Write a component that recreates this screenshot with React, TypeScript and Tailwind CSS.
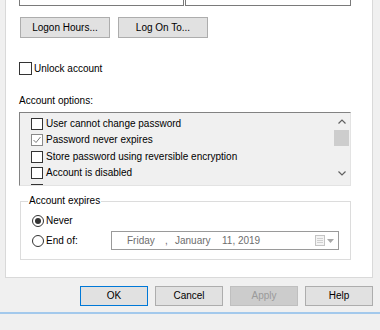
import { useState } from "react";

const options = [
  { label: "User cannot change password", checked: false },
  { label: "Password never expires", checked: true },
  { label: "Store password using reversible encryption", checked: false },
  { label: "Account is disabled", checked: false },
  { label: "Smart card is required for interactive logon", checked: false },
];

const CheckBox = ({ checked = false, muted = false }: { checked?: boolean; muted?: boolean }) => (
  <span
    className={`flex h-[12px] w-[12px] shrink-0 items-center justify-center border bg-white ${
      muted ? "border-[#8a8a8a]" : "border-[#333333]"
    }`}
  >
    {checked && (
      <svg width="10" height="10" viewBox="0 0 10 10">
        <polyline points="1.5,5 4,7.5 8.5,2" fill="none" stroke="#7a7a7a" strokeWidth="1" />
      </svg>
    )}
  </span>
);

const Radio = ({ checked = false }: { checked?: boolean }) => (
  <span className="flex h-[12px] w-[12px] shrink-0 items-center justify-center rounded-full border border-[#333333] bg-white">
    {checked && <span className="h-[6px] w-[6px] rounded-full bg-[#333333]" />}
  </span>
);

const Button = ({ label, className = "" }: { label: string; className?: string }) => (
  <button className={`flex items-center justify-center border text-[10px] leading-none ${className}`}>{label}</button>
);

export default function App() {
  const [neverExpires, setNeverExpires] = useState(true);

  return (
    <div className="relative h-[330px] w-[380px] overflow-hidden bg-[#f0f0f0] font-['Liberation_Sans',Arial,sans-serif] text-[10px] leading-[12px] text-black">
      {/* tab page */}
      <div className="ml-[5px] h-[294px] w-[368px] border-x border-b border-[#d9d9d9] bg-white pl-[13px]">
        {/* name fields, scrolled off the top */}
        <div className="-mt-[16px] flex h-[22px] gap-[1px]">
          <div className="h-full w-[165px] border border-[#7a7a7a] bg-white" />
          <div className="h-full w-[166px] border border-[#7a7a7a] bg-white" />
        </div>

        <div className="ml-[1px] mt-[11px] flex gap-[8px]">
          <Button label="Logon Hours..." className="h-[21px] w-[90px] border-[#adadad] bg-[#e1e1e1]" />
          <Button label="Log On To..." className="h-[21px] w-[90px] border-[#adadad] bg-[#e1e1e1]" />
        </div>

        <label className="mt-[24px] flex h-[13px] items-center gap-[2px]">
          <span className="h-[13px] w-[13px] border border-[#333333] bg-white" />
          <span>Unlock account</span>
        </label>

        <div className="mt-[20px] h-[12px]">Account options:</div>

        {/* account options list */}
        <div className="mt-[5px] flex h-[74px] w-[332px] overflow-hidden border border-b-[#e3e3e3] border-l-[#828282] border-r-[#e3e3e3] border-t-[#828282] bg-[#f0f0f0]">
          <div className="flex-1 overflow-hidden pl-[11px] pt-[2.5px]">
            {options.map((o) => (
              <div key={o.label} className="flex h-[16.5px] items-center gap-[2px] whitespace-nowrap">
                <CheckBox checked={o.checked} muted={o.checked} />
                <span className="pl-[1px]">{o.label}</span>
              </div>
            ))}
          </div>
          <div className="flex w-[17px] flex-col items-center pt-[6px]">
            <svg width="8" height="5" viewBox="0 0 8 5">
              <polyline points="0.5,4.5 4,1 7.5,4.5" fill="none" stroke="#606060" strokeWidth="1.2" />
            </svg>
            <div className="mt-[6px] h-[16px] w-[15px] bg-[#cdcdcd]" />
            <svg className="mt-[25px]" width="8" height="5" viewBox="0 0 8 5">
              <polyline points="0.5,0.5 4,4 7.5,0.5" fill="none" stroke="#606060" strokeWidth="1.2" />
            </svg>
          </div>
        </div>

        {/* account expires */}
        <fieldset className="ml-[1px] mt-[9px] h-[65px] w-[331px] border border-[#dcdcdc] pl-[11px]">
          <legend className="-ml-[4px] px-[1px] leading-[12px]">Account expires</legend>
          <label className="mt-[6px] flex h-[16px] items-center gap-[2px]" onClick={() => setNeverExpires(true)}>
            <Radio checked={neverExpires} />
            <span>Never</span>
          </label>
          <div className="mt-[2px] flex h-[19px] items-center">
            <label className="flex w-[79px] items-center gap-[2px]" onClick={() => setNeverExpires(false)}>
              <Radio checked={!neverExpires} />
              <span>End of:</span>
            </label>
            <div className="flex h-[19px] w-[228px] items-center border border-[#9a9a9a] bg-white pl-[15px] text-[#6d6d6d]">
              <span className="w-[38px]">Friday</span>
              <span className="w-[10px]">,</span>
              <span className="w-[47px]">January</span>
              <span>11, 2019</span>
              <span className="ml-auto mr-[4px] flex items-center gap-[2px]">
                <svg width="10" height="11" viewBox="0 0 10 11">
                  <rect x="0.5" y="0.5" width="9" height="10" fill="#f4f4f4" stroke="#c4c4c4" />
                  <line x1="2" y1="3.5" x2="8" y2="3.5" stroke="#d0d0d0" />
                  <line x1="2" y1="5.5" x2="8" y2="5.5" stroke="#d0d0d0" />
                  <line x1="2" y1="7.5" x2="8" y2="7.5" stroke="#d0d0d0" />
                </svg>
                <svg width="7" height="4" viewBox="0 0 7 4">
                  <polygon points="0,0 7,0 3.5,4" fill="#a8a8a8" />
                </svg>
              </span>
            </div>
          </div>
        </fieldset>
      </div>

      {/* dialog buttons */}
      <div className="mt-[8px] flex justify-end gap-[7px] pr-[7px]">
        <Button label="OK" className="h-[20px] w-[68px] border-[#0078d7] bg-[#e1e1e1]" />
        <Button label="Cancel" className="h-[20px] w-[68px] border-[#adadad] bg-[#e1e1e1]" />
        <Button label="Apply" className="h-[20px] w-[68px] border-[#bfbfbf] bg-[#cccccc] text-[#9a9a9a]" />
        <Button label="Help" className="h-[20px] w-[68px] border-[#adadad] bg-[#e1e1e1]" />
      </div>

      <div className="mt-[6px] h-[2px] bg-[#a3c9ec]" />
    </div>
  );
}
